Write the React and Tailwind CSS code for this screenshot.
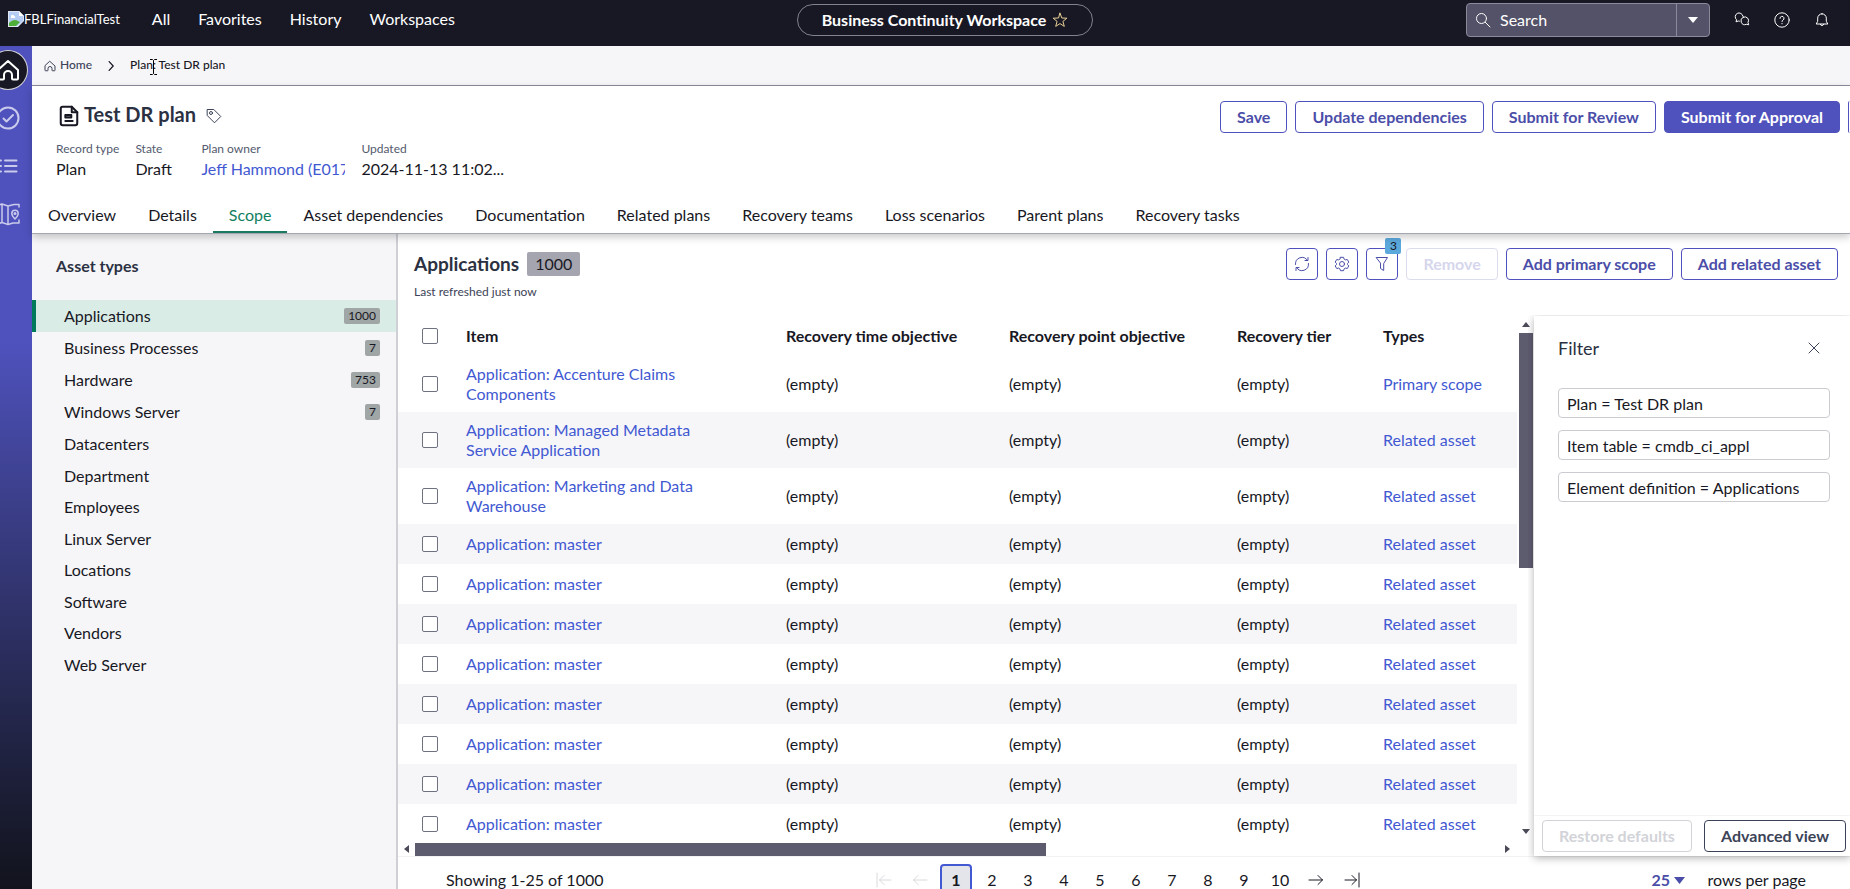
import { useState } from 'react'

const tabs = [
  'Overview', 'Details', 'Scope', 'Asset dependencies', 'Documentation', 'Related plans',
  'Recovery teams', 'Loss scenarios', 'Parent plans', 'Recovery tasks',
]

const assetTypes = [
  { label: 'Applications', count: 1000 },
  { label: 'Business Processes', count: 7 },
  { label: 'Hardware', count: 753 },
  { label: 'Windows Server', count: 7 },
  { label: 'Datacenters' },
  { label: 'Department' },
  { label: 'Employees' },
  { label: 'Linux Server' },
  { label: 'Locations' },
  { label: 'Software' },
  { label: 'Vendors' },
  { label: 'Web Server' },
]

const rows = [
  { item: 'Application: Accenture Claims Components', type: 'Primary scope' },
  { item: 'Application: Managed Metadata Service Application', type: 'Related asset' },
  { item: 'Application: Marketing and Data Warehouse', type: 'Related asset' },
  ...Array.from({ length: 8 }, () => ({ item: 'Application: master', type: 'Related asset' })),
]

const filters = [
  { name: 'Plan', value: 'Plan = Test DR plan' },
  { name: 'Item table', value: 'Item table = cmdb_ci_appl' },
  { name: 'Element definition', value: 'Element definition = Applications' },
]

const pages = [1, 2, 3, 4, 5, 6, 7, 8, 9, 10]

function Icon({ size = 16, width = 1, box = 16, className = '', children }) {
  return (
    <svg
      width={size}
      height={size}
      viewBox={`0 0 ${box} ${box}`}
      fill="none"
      stroke="currentColor"
      strokeWidth={width}
      strokeLinecap="round"
      strokeLinejoin="round"
      className={`shrink-0 ${className}`}
      aria-hidden="true"
    >
      {children}
    </svg>
  )
}

function Button({ children, variant = 'outline', ...props }) {
  const styles = {
    outline: 'border-[#4f52bd] text-[#4b4ea8] bg-white',
    primary: 'border-[#4f52bd] bg-[#4f52bd] text-white',
    faded: 'border-[#dcdcef] text-[#d6d6ec] bg-white',
    muted: 'border-[#d2d3d8] text-[#d2d3d8] bg-white',
    dark: 'border-[#3c4357] text-[#3c4357] bg-white',
  }
  return (
    <button
      className={`h-8 shrink-0 whitespace-nowrap rounded border px-4 text-base leading-5 font-bold ${styles[variant]}`}
      {...props}
    >
      {children}
    </button>
  )
}

function IconButton({ label, children }) {
  return (
    <button
      aria-label={label}
      className="relative flex h-8 w-8 shrink-0 items-center justify-center rounded border border-[#4f52bd] text-[#4b4ea8]"
    >
      {children}
    </button>
  )
}

function TopBar() {
  return (
    <header className="flex h-[46px] shrink-0 items-start bg-[#181824] text-white">
      <div className="flex flex-1 items-center pl-2 pt-[3px]">
        <a href="#" className="flex h-8 items-center text-[13px] leading-5">
          <svg width="16" height="16" viewBox="0 0 16 16" aria-hidden="true">
            <path d="M0 0h11l5 5v5L10 16H0z" fill="#dfe6f2" />
            <path d="M1 1h10v4h4v5l-6 5H1z" fill="#b5cdf3" />
            <path d="M3 5.500a1.500 1.500 0 0 1 3-.5 1.200 1.200 0 0 1 1 2H3z" fill="#fff" />
            <path d="M1 15v-3c3-3 6-4 9-2l2 1-4 4z" fill="#4fae3a" />
            <path d="M11 0v5h5z" fill="#fff" />
          </svg>
          FBLFinancialTest
        </a>
        <nav className="ml-8 flex gap-7 text-base leading-5">
          {['All', 'Favorites', 'History', 'Workspaces'].map((n) => (
            <a key={n} href="#">{n}</a>
          ))}
        </nav>
      </div>

      <button className="mt-1 ml-[52px] flex h-8 items-center gap-1.5 rounded-full border border-[#82828f] px-6 text-base leading-5 font-bold">
        Business Continuity Workspace
        <Icon size={16} className="text-[#e6cf94]">
          <path d="M8 1.200l1.800 4.800 5.100.2-4 3.200 1.400 5L8 11.600l-4.300 2.800 1.400-5-4-3.200 5.100-.2z" />
        </Icon>
      </button>

      <div className="flex flex-1 items-center justify-end pr-5 pt-[3px]">
        <div className="flex h-[34px] w-[244px] items-center rounded-sm border border-[#8b899b] bg-[#545268]">
          <Icon size={16} className="ml-2">
            <circle cx="6.500" cy="6.500" r="5" />
            <path d="M10.300 10.300 15 15" />
          </Icon>
          <input
            aria-label="Search"
            placeholder="Search"
            className="ml-[9px] min-w-0 flex-1 bg-transparent text-base leading-5 placeholder:text-white"
          />
          <button aria-label="Search scope" className="flex h-full w-[33px] items-center justify-center border-l border-[#8b899b]">
            <svg width="10" height="6" viewBox="0 0 10 6" aria-hidden="true"><path d="M0 0h10L5 6z" fill="#fff" /></svg>
          </button>
        </div>
        <div className="ml-6 flex items-center gap-6">
          <button aria-label="Conversations">
            <Icon>
              <path d="M5.500 9.200A4 4 0 0 1 4.500 9l-2.500.8.600-2A3.900 3.900 0 1 1 9 4.300" />
              <path d="M9.300 5.200a3.700 3.700 0 0 1 4.700 5.300l.7 2.300-2.400-.5A3.700 3.700 0 1 1 9.300 5.200z" />
            </Icon>
          </button>
          <button aria-label="Help">
            <Icon>
              <circle cx="8" cy="8" r="7.200" />
              <path d="M6 6.400a2 2 0 1 1 3 1.700c-.7.400-1 .7-1 1.400" />
              <path d="M8 11.500v.3" />
            </Icon>
          </button>
          <button aria-label="Notifications">
            <Icon>
              <path d="M8 1.800a4.300 4.300 0 0 0-4.300 4.300v3.200L2.200 12h11.600l-1.500-2.700V6.100A4.300 4.300 0 0 0 8 1.800z" />
              <path d="M6.300 12.300a1.800 1.800 0 0 0 3.400 0" />
            </Icon>
          </button>
        </div>
      </div>
    </header>
  )
}

function Rail() {
  return (
    <nav className="flex w-8 shrink-0 flex-col overflow-hidden bg-linear-to-b from-[#4f52bd] from-35% to-[#12131d] pt-1 text-[#c9caec]">
      <a href="#" aria-label="Home" className="-ml-3 flex h-10 w-10 items-center justify-center rounded-full border border-white/80 bg-[#181824] text-white">
        <Icon size={24} box={24} width={2}>
          <path d="M12 3 22 12v8.500a1 1 0 0 1-1 1h-4a1 1 0 0 1-1-1V17a4 4 0 0 0-8 0v3.500a1 1 0 0 1-1 1H3a1 1 0 0 1-1-1V12z" />
        </Icon>
      </a>
      <a href="#" aria-label="Tasks" className="-ml-3 flex h-12 w-10 items-center justify-center pt-2">
        <Icon size={24} box={24} width={2}>
          <circle cx="12" cy="12" r="10.500" />
          <path d="m7.500 12.500 3 3L17 9" />
        </Icon>
      </a>
      <a href="#" aria-label="Lists" className="-ml-3 flex h-12 w-10 items-center justify-center pt-2">
        <Icon size={24} box={24} width={2}>
          <path d="M9 6.500h11.500M9 12h11.500M9 17.500h11.500M4 6.500h1M4 12h1M4 17.500h1" />
        </Icon>
      </a>
      <a href="#" aria-label="Map" className="-ml-3 flex h-12 w-10 items-center justify-center pt-2">
        <Icon size={24} box={24} width={1.5}>
          <path d="M23 5V2.500h-5L12 4 6 2v18.500l6 2 5-1.500h6v-3M6 2 1 3.500V22l5-1.500M12 4v18" />
          <path d="M19 17c-2-2-3.200-3.800-3.200-5.500a3.200 3.200 0 0 1 6.400 0c0 1.700-1.200 3.500-3.200 5.500z" />
          <circle cx="19" cy="11.500" r=".8" />
        </Icon>
      </a>
    </nav>
  )
}

function Breadcrumb() {
  return (
    <nav className="relative flex h-10 shrink-0 items-center border-b border-[#8a8d9f] bg-[#f6f6f8] pb-0.5 pl-3 text-xs leading-5 font-medium">
      <a href="#" className="flex items-center gap-1 text-[#3c4357]">
        <Icon size={12} box={24} width={2} className="mt-0.5">
          <path d="M12 3 22 12v8.500a1 1 0 0 1-1 1h-4a1 1 0 0 1-1-1V17a4 4 0 0 0-8 0v3.500a1 1 0 0 1-1 1H3a1 1 0 0 1-1-1V12z" />
        </Icon>
        Home
      </a>
      <Icon size={10} width={2} className="mx-3.5 mt-0.5 text-[#181824]">
        <path d="m5 1 6.500 7L5 15" />
      </Icon>
      <span className="text-[#181824]">Plan: Test DR plan</span>
      <svg width="9" height="16" viewBox="0 0 9 16" fill="none" stroke="#000" className="absolute left-[117px] top-[13px]" aria-hidden="true">
        <path d="M1 .5h2.500l1 1 1-1H8M4.500 1.500v13M1 15.500h2.500l1-1 1 1H8" />
      </svg>
    </nav>
  )
}

function Field({ label, className = '', children }) {
  return (
    <div className={className}>
      <p className="text-xs leading-4 text-[#535a6e]">{label}</p>
      <p className="mt-0.5 overflow-hidden whitespace-nowrap text-base leading-5">{children}</p>
    </div>
  )
}

function RecordHeader({ tab, setTab }) {
  return (
    <section className="relative z-10 shrink-0 overflow-x-clip border-b border-[#a3a7b3] bg-white shadow-[0_3px_8px_rgba(0,0,0,0.22)]">
      <div className="flex items-start justify-between pl-6 pt-[15px]">
        <div>
          <div className="flex h-[26px] items-center pl-0.5">
            <Icon size={22} box={24} width={2.2} className="mt-1 text-[#181824]">
              <path d="M15 2H5a2 2 0 0 0-2 2v16a2 2 0 0 0 2 2h14a2 2 0 0 0 2-2V8z" />
              <path d="M15 2v6h6" width="1" />
              <path d="M8 11h6.500v2.500H8zM8 17.500h8" />
            </Icon>
            <h1 className="ml-1 text-xl leading-6 font-bold text-[#2b3142]">Test DR plan</h1>
            <Icon size={16} className="ml-2.5 mt-1 text-[#3c4357]">
              <path d="M1.500 1.500h6.300l7 7-6.300 6.300-7-7z" />
              <circle cx="5" cy="5" r="1.500" />
            </Icon>
          </div>
          <div className="mt-[14px] flex gap-4">
            <Field label="Record type">Plan</Field>
            <Field label="State" className="w-[50px]">Draft</Field>
            <Field label="Plan owner" className="w-36">
              <a href="#" className="text-[#4259d2]">Jeff Hammond (E017)</a>
            </Field>
            <Field label="Updated">2024-11-13 11:02...</Field>
          </div>
        </div>
        <div className="flex gap-2">
          <Button>Save</Button>
          <Button>Update dependencies</Button>
          <Button>Submit for Review</Button>
          <Button variant="primary">Submit for Approval</Button>
          <button aria-label="More actions" className="h-8 w-0.5 rounded-l border-l border-[#4f52bd]" />
        </div>
      </div>
      <div role="tablist" className="mt-5 flex">
        {tabs.map((t) => (
          <button
            key={t}
            role="tab"
            aria-selected={t === tab}
            onClick={() => setTab(t)}
            className={`h-[34px] whitespace-nowrap border-b-2 px-4 text-base leading-5 ${
              t === tab ? 'border-[#1b7a5f] text-[#12805f]' : 'border-transparent'
            }`}
          >
            {t}
          </button>
        ))}
      </div>
    </section>
  )
}

function AssetTypes({ active, setActive }) {
  return (
    <aside className="w-[366px] shrink-0 border-r-2 border-[#cfd0d6] bg-[#f6f6f8]">
      <h2 className="px-6 pt-[22px] pb-6 text-base leading-5 font-bold text-[#2b3142]">Asset types</h2>
      <ul>
        {assetTypes.map(({ label, count }) => (
          <li key={label} className={count ? 'h-8' : 'h-8 even:h-[31px]'}>
            <button
              onClick={() => setActive(label)}
              className={`flex h-full w-full items-center justify-between border-l-4 pl-7 pr-4 text-base leading-5 ${
                label === active ? 'border-[#007a5c] bg-[#d9ece6]' : 'border-transparent'
              }`}
            >
              {label}
              {count && <span className="rounded-xs bg-[#a0a6a6] px-1 text-xs leading-4">{count}</span>}
            </button>
          </li>
        ))}
      </ul>
    </aside>
  )
}

function CheckBox({ label }) {
  return (
    <input
      type="checkbox"
      aria-label={label}
      className="block h-4 w-4 appearance-none rounded-xs border border-[#6d7180] bg-white checked:bg-[#4f52bd]"
    />
  )
}

function AssetTable() {
  return (
    <div className="flex min-w-0 flex-1 flex-col">
      <div className="flex min-h-0 flex-1">
        <div className="min-w-0 flex-1 overflow-hidden">
          <table className="w-full table-fixed text-left text-base leading-5">
            <colgroup>
              <col className="w-[52px]" />
              <col className="w-80" />
              <col className="w-[223px]" />
              <col className="w-[228px]" />
              <col className="w-[146px]" />
              <col />
            </colgroup>
            <thead>
              <tr className="h-10">
                <th className="pl-6"><CheckBox label="Select all" /></th>
                <th className="px-4">Item</th>
                <th className="px-4">Recovery time objective</th>
                <th className="px-4">Recovery point objective</th>
                <th className="px-4">Recovery tier</th>
                <th className="px-4">Types</th>
              </tr>
            </thead>
            <tbody>
              {rows.map((r, i) => (
                <tr key={i} className="h-10 even:bg-[#f6f6f8]">
                  <td className="pl-6"><CheckBox label={`Select ${r.item}`} /></td>
                  <td className="px-4 py-2">
                    <a href="#" className="block max-w-60 text-[#4259d2]">{r.item}</a>
                  </td>
                  <td className="px-4">(empty)</td>
                  <td className="px-4">(empty)</td>
                  <td className="px-4">(empty)</td>
                  <td className="px-4"><a href="#" className="text-[#4259d2]">{r.type}</a></td>
                </tr>
              ))}
            </tbody>
          </table>
        </div>
        <div className="mr-px ml-0.5 flex w-[14px] flex-col items-center pt-1.5 pb-2">
          <svg width="8" height="5" viewBox="0 0 8 5" aria-hidden="true"><path d="M4 0l4 5H0z" fill="#4a4a58" /></svg>
          <div className="mt-1.5 h-[235px] w-full bg-[#5d5b6e]" />
          <svg width="8" height="5" viewBox="0 0 8 5" className="mt-auto" aria-hidden="true"><path d="M0 0h8L4 5z" fill="#4a4a58" /></svg>
        </div>
      </div>
      <div className="flex h-[14px] items-center pl-1.5 pr-6">
        <svg width="5" height="8" viewBox="0 0 5 8" aria-hidden="true"><path d="M5 0v8L0 4z" fill="#4a4a58" /></svg>
        <div className="ml-1.5 h-[13px] w-[631px] bg-[#5d5b6e]" />
        <svg width="5" height="8" viewBox="0 0 5 8" className="ml-auto" aria-hidden="true"><path d="M0 0v8l5-4z" fill="#4a4a58" /></svg>
      </div>
    </div>
  )
}

function FilterPanel() {
  return (
    <aside className="relative flex w-[316px] shrink-0 flex-col bg-white shadow-[0_2px_8px_rgba(0,0,0,0.3)] [clip-path:inset(-1px_0_-12px_-6px)]">
      <div className="flex items-center justify-between pl-6 pr-7 pt-5">
        <h2 className="text-lg leading-6 text-[#2b3142]">Filter</h2>
        <button aria-label="Close filter" className="text-[#3c4357]">
          <Icon size={16}><path d="m3 3 10 10M13 3 3 13" /></Icon>
        </button>
      </div>
      <div className="mt-7 flex flex-1 flex-col gap-3 pl-6 pr-5">
        {filters.map((f) => (
          <input
            key={f.name}
            aria-label={f.name}
            defaultValue={f.value}
            className="h-[30px] w-full rounded-sm border border-[#cbccd2] px-2 text-base leading-5"
          />
        ))}
      </div>
      <div className="flex justify-between border-t border-[#f4f4f6] py-1 pl-2 pr-1">
        <Button variant="muted" disabled>Restore defaults</Button>
        <Button variant="dark">Advanced view</Button>
      </div>
    </aside>
  )
}

function Pager() {
  const [page, setPage] = useState(1)
  return (
    <footer className="flex h-[33px] shrink-0 items-start justify-between overflow-hidden border-t border-[#f2f2f4] pl-12 pr-11 pt-[7px] text-base leading-4">
      <span className="flex h-8 flex-1 items-center">Showing 1-25 of 1000</span>
      <div className="flex gap-1">
        <button aria-label="First page" disabled className="flex h-8 w-8 items-center justify-center text-[#d9dade]">
          <Icon><path d="M1 1v14M15 8H3.500M8 3.500 3.500 8 8 12.500" /></Icon>
        </button>
        <button aria-label="Previous page" disabled className="flex h-8 w-8 items-center justify-center text-[#d9dade]">
          <Icon><path d="M15 8H1.500M6 3.500 1.500 8 6 12.500" /></Icon>
        </button>
        {pages.map((p) => (
          <button
            key={p}
            onClick={() => setPage(p)}
            className={`h-8 min-w-8 rounded-sm border-2 ${
              p === page ? 'border-[#4259d2] bg-[#e4e5ea] font-bold' : 'border-transparent'
            }`}
          >
            {p}
          </button>
        ))}
        <button aria-label="Next page" className="flex h-8 w-8 items-center justify-center">
          <Icon><path d="M1 8h13.500M10 3.500l4.500 4.500-4.500 4.500" /></Icon>
        </button>
        <button aria-label="Last page" className="flex h-8 w-8 items-center justify-center">
          <Icon><path d="M15 1v14M1 8h11.500M8 3.500 12.500 8 8 12.500" /></Icon>
        </button>
      </div>
      <div className="flex h-8 flex-1 items-center justify-end pl-4">
        <label htmlFor="page-size" className="order-2 ml-[22px]">rows per page</label>
        <div className="flex items-center gap-1">
          <select id="page-size" defaultValue="25" className="appearance-none bg-transparent font-bold text-[#4b4ea8]">
            <option>25</option>
            <option>50</option>
          </select>
          <svg width="11" height="7" viewBox="0 0 11 7" aria-hidden="true"><path d="M0 0h11L5.500 7z" fill="#4b4ea8" /></svg>
        </div>
      </div>
    </footer>
  )
}

export default function App() {
  const [tab, setTab] = useState('Scope')
  const [active, setActive] = useState('Applications')

  return (
    <div className="flex h-screen flex-col overflow-hidden bg-white font-[Lato,sans-serif] text-[#181824]">
      <TopBar />
      <div className="flex min-h-0 flex-1">
        <Rail />
        <div className="flex min-w-0 flex-1 flex-col">
          <Breadcrumb />
          <RecordHeader tab={tab} setTab={setTab} />
          <div className="flex min-h-0 flex-1">
            <AssetTypes active={active} setActive={setActive} />
            <main className="flex min-w-0 flex-1 flex-col">
              <div className="flex items-start justify-between pl-4 pr-3 pt-3.5 pb-4">
                <div className="pt-1">
                  <div className="flex items-center gap-2">
                    <h2 className="text-[19px] leading-6 font-bold text-[#2b3142]">Applications</h2>
                    <span className="rounded-xs bg-[#a5a5af] px-2 text-base leading-6">1000</span>
                  </div>
                  <p className="mt-2 text-xs leading-4 text-[#3c4357]">Last refreshed just now</p>
                </div>
                <div className="flex gap-2">
                  <IconButton label="Refresh">
                    <Icon>
                      <path d="M1.500 8.500A6.500 6.500 0 0 1 13.500 4.500M14.500 7.500A6.500 6.500 0 0 1 2.500 11.500" />
                      <path d="M14 1.500v3h-3M2 14.500v-3h3" />
                    </Icon>
                  </IconButton>
                  <IconButton label="List settings">
                    <Icon>
                      <path d="M6.500 1.300h3l.6 1.800 1.300.8 1.900-.4 1.500 2.600-1.300 1.400v1l1.300 1.400-1.500 2.600-1.900-.4-1.300.8-.6 1.800h-3l-.6-1.800-1.300-.8-1.900.4-1.500-2.600 1.300-1.400v-1L1.200 6.100l1.500-2.600 1.900.4 1.300-.8z" />
                      <circle cx="8" cy="8" r="2.500" />
                    </Icon>
                  </IconButton>
                  <IconButton label="Filter">
                    <Icon>
                      <path d="M2.500 1.500h11L9.700 7.500v7L6.500 12.500v-5z" />
                    </Icon>
                    <span className="absolute -top-[11px] -right-1 w-4 rounded-xs bg-[#5ba8dc] text-center text-xs leading-4 text-[#181824]">3</span>
                  </IconButton>
                  <Button variant="faded" disabled>Remove</Button>
                  <Button>Add primary scope</Button>
                  <Button>Add related asset</Button>
                </div>
              </div>
              <div className="flex min-h-0 flex-1">
                <AssetTable />
                <FilterPanel />
              </div>
              <Pager />
            </main>
          </div>
        </div>
      </div>
    </div>
  )
}
